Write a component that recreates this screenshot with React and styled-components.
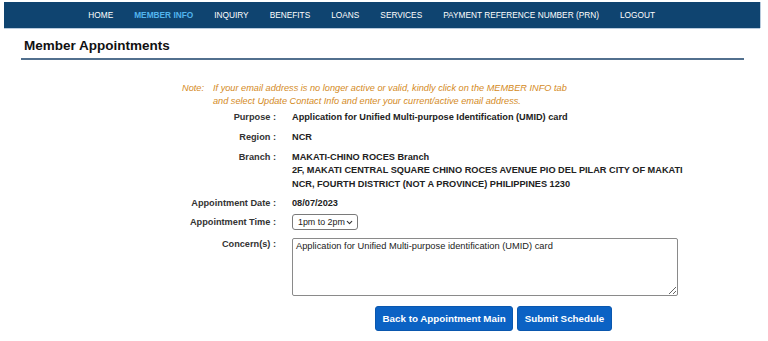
import React from 'react'
import styled, { createGlobalStyle } from 'styled-components'
import { ChevronDown } from 'lucide-react'

const GlobalStyle = createGlobalStyle`
  * { margin: 0; padding: 0; box-sizing: border-box; }
  body {
    background: #ffffff;
    font-family: "Liberation Sans", Arial, sans-serif;
    color: #222;
  }
`

const Nav = styled.nav`
  margin: 2px 8px 0 4px;
  height: 26px;
  background: #0f4470;
  box-shadow: 0 1px 0 #b8cbdd, 1px 0 0 #b8cbdd;
  display: flex;
  align-items: center;
  padding-left: 73.8px;
`

const NavItem = styled.a`
  font-size: 8.3px;
  font-weight: ${p => (p.$active ? 700 : 400)};
  color: ${p => (p.$active ? '#52b4ee' : '#ffffff')};
  padding: 0 10.5px;
  text-decoration: none;
  white-space: nowrap;
`

const Header = styled.div`
  margin: 10px 24px 0 21px;
  padding: 0 0 4px 3px;
  border-bottom: 2px solid #52708e;
`

const Title = styled.h1`
  font-size: 13.5px;
  font-weight: 700;
  color: #111;
  line-height: 16px;
`

const Note = styled.div`
  display: flex;
  gap: 9px;
  padding-left: 182px;
  margin-top: 22px;
  color: #d48a1d;
  font-style: italic;
  font-size: 9.2px;
  line-height: 13px;
`

const Form = styled.div`
  margin-top: 3px;
`

const Row = styled.div`
  display: grid;
  grid-template-columns: 276px 1fr;
  column-gap: 16px;
  align-items: ${p => p.$align || 'start'};
  margin-bottom: ${p => p.$gap ?? 7}px;
  font-size: 9.2px;
  line-height: ${p => p.$lh || 13}px;
`

const Label = styled.div`
  text-align: right;
  font-weight: 700;
  color: #333;
`

const Value = styled.div`
  font-weight: 700;
  color: #222;
`

const SelectWrap = styled.div`
  position: relative;
  width: 66px;
  height: 16px;
`

const Select = styled.select`
  appearance: none;
  width: 100%;
  height: 100%;
  border: 1px solid #7a7a7a;
  border-radius: 3px;
  background: #fff;
  font-family: "Liberation Sans", Arial, sans-serif;
  font-size: 8.9px;
  color: #222;
  padding: 0 0 0 5px;
`

const Chevron = styled(ChevronDown)`
  position: absolute;
  right: 4px;
  top: 4px;
  pointer-events: none;
`

const TextArea = styled.textarea`
  width: 386px;
  height: 58px;
  border: 1px solid #8a8a8a;
  border-radius: 2px;
  padding: 2px 3px;
  font-family: "Liberation Sans", Arial, sans-serif;
  font-size: 9.3px;
  line-height: 11px;
  color: #222;
  resize: both;
`

const Buttons = styled.div`
  display: flex;
  gap: 4px;
  padding-left: 83px;
`

const Button = styled.button`
  height: 25px;
  padding: 0 6.5px;
  background: #0b62c4;
  border: 1px solid #0a57ae;
  border-radius: 3px;
  color: #fff;
  font-family: "Liberation Sans", Arial, sans-serif;
  font-size: 9.8px;
  font-weight: 700;
`

const navItems = [
  'HOME',
  'MEMBER INFO',
  'INQUIRY',
  'BENEFITS',
  'LOANS',
  'SERVICES',
  'PAYMENT REFERENCE NUMBER (PRN)',
  'LOGOUT',
]

export default function App() {
  return (
    <div>
      <GlobalStyle />
      <Nav>
        {navItems.map(item => (
          <NavItem key={item} $active={item === 'MEMBER INFO'}>
            {item}
          </NavItem>
        ))}
      </Nav>
      <Header>
        <Title>Member Appointments</Title>
      </Header>
      <Note>
        <span>Note:</span>
        <span>
          If your email address is no longer active or valid, kindly click on the MEMBER INFO tab
          <br />
          and select Update Contact Info and enter your current/active email address.
        </span>
      </Note>
      <Form>
        <Row>
          <Label>Purpose :</Label>
          <Value>Application for Unified Multi-purpose Identification (UMID) card</Value>
        </Row>
        <Row>
          <Label>Region :</Label>
          <Value>NCR</Value>
        </Row>
        <Row $lh={13.4} $gap={6}>
          <Label>Branch :</Label>
          <Value>
            MAKATI-CHINO ROCES Branch
            <br />
            2F, MAKATI CENTRAL SQUARE CHINO ROCES AVENUE PIO DEL PILAR CITY OF MAKATI
            <br />
            NCR, FOURTH DISTRICT (NOT A PROVINCE) PHILIPPINES 1230
          </Value>
        </Row>
        <Row $gap={4}>
          <Label>Appointment Date :</Label>
          <Value>08/07/2023</Value>
        </Row>
        <Row $align="center" $gap={8}>
          <Label>Appointment Time :</Label>
          <SelectWrap>
            <Select defaultValue="1pm to 2pm">
              <option>1pm to 2pm</option>
            </Select>
            <Chevron size={9} strokeWidth={3} color="#333" />
          </SelectWrap>
        </Row>
        <Row $gap={10}>
          <Label>Concern(s) :</Label>
          <TextArea defaultValue="Application for Unified Multi-purpose identification (UMID) card" />
        </Row>
        <Row>
          <div />
          <Buttons>
            <Button>Back to Appointment Main</Button>
            <Button>Submit Schedule</Button>
          </Buttons>
        </Row>
      </Form>
    </div>
  )
}
